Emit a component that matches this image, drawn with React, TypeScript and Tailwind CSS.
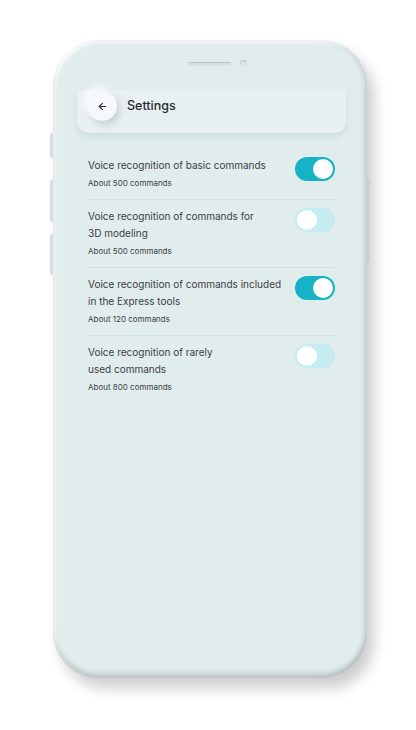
import { useState } from 'react';

type Option = {
  id: string;
  lines: string[];
  count: string;
  on: boolean;
};

const OPTIONS: Option[] = [
  { id: 'basic', lines: ['Voice recognition of basic commands'], count: 'About 500 commands', on: true },
  { id: '3d', lines: ['Voice recognition of commands for', '3D modeling'], count: 'About 500 commands', on: false },
  { id: 'express', lines: ['Voice recognition of commands included', 'in the Express tools'], count: 'About 120 commands', on: true },
  { id: 'rare', lines: ['Voice recognition of rarely', 'used commands'], count: 'About 800 commands', on: false },
];

function Toggle({ on, onClick }: { on: boolean; onClick: () => void }) {
  return (
    <button
      onClick={onClick}
      className={
        'w-10 h-6 shrink-0 rounded-full p-[2px] flex items-center transition-colors ' +
        (on ? 'bg-[#15b3c5] justify-end' : 'bg-[#c4ecf1] justify-start')
      }
    >
      <span className="w-5 h-5 rounded-full bg-white" />
    </button>
  );
}

export default function App() {
  const [options, setOptions] = useState(OPTIONS);

  const flip = (id: string) =>
    setOptions(prev => prev.map(o => (o.id === id ? { ...o, on: !o.on } : o)));

  return (
    <div
      className="w-[416px] h-[730px] bg-white pt-[40px] pl-[53px]"
      style={{ fontFamily: 'Inter, "Noto Sans", sans-serif' }}
    >
      <div className="relative w-[314px] h-[638px]">
        {/* side buttons */}
        <div className="absolute left-[-3px] top-[93px] w-[3px] h-[25px] rounded-l-sm bg-[#d5dfe0]" />
        <div className="absolute left-[-3px] top-[140px] w-[3px] h-[42px] rounded-l-sm bg-[#d5dfe0]" />
        <div className="absolute left-[-3px] top-[194px] w-[3px] h-[41px] rounded-l-sm bg-[#d5dfe0]" />
        <div className="absolute right-[-3px] top-[140px] w-[3px] h-[83px] rounded-r-sm bg-[#c9d2d3]" />

        <div className="w-full h-full rounded-[46px] bg-[#e1ecec] overflow-hidden shadow-[inset_0_-5px_5px_rgba(0,0,0,0.14),inset_-4px_0_4px_rgba(0,0,0,0.07),inset_3px_3px_3px_rgba(255,255,255,0.7),7px_10px_14px_rgba(0,0,0,0.2)]">
          <div className="flex items-center gap-[9px] ml-[135px] pt-[20px]">
            <div className="w-[43px] h-[4px] rounded-full bg-[#d8e3e4] shadow-[inset_0_1px_1px_rgba(0,0,0,0.15)]" />
            <div className="w-[7px] h-[7px] rounded-full bg-[#dbe5e6] shadow-[inset_0_1px_1px_rgba(0,0,0,0.18)]" />
          </div>

          <div className="mt-[23px] ml-[24px] w-[269px] h-[43px] rounded-b-xl bg-[#e8f0f2] shadow-[0_4px_5px_rgba(120,150,155,0.16)] flex items-start pl-[10px] pt-[1px] gap-[10px]">
            <button className="w-[30px] h-[30px] rounded-full bg-[#f6f8f9] flex items-center justify-center shadow-[3px_4px_7px_rgba(120,140,160,0.3),-4px_-4px_7px_rgba(255,255,255,0.9)]">
              <svg width="11" height="11" viewBox="0 0 24 24" fill="none" stroke="#2b3036" strokeWidth="2.4" strokeLinecap="round" strokeLinejoin="round">
                <path d="M19 12H5" />
                <path d="M12 19l-7-7 7-7" />
              </svg>
            </button>
            <div className="h-[30px] flex items-center text-[12.5px] font-medium text-[#262b31]">Settings</div>
          </div>

          <div className="mt-[16px] ml-[35px] w-[247px]">
            {options.map(option => (
              <div key={option.id} className="flex items-start gap-2 pt-2 pb-[10px] border-b border-[#d3e0e1] last:border-b-0">
                <div className="flex-1 min-w-0">
                  <div className="text-[10px] leading-[17px] text-[#3b4045] whitespace-nowrap">
                    {option.lines.map(line => (
                      <div key={line}>{line}</div>
                    ))}
                  </div>
                  <div className="mt-1 text-[8px] leading-[11px] text-[#3b4045]">{option.count}</div>
                </div>
                <Toggle on={option.on} onClick={() => flip(option.id)} />
              </div>
            ))}
          </div>
        </div>
      </div>
    </div>
  );
}
